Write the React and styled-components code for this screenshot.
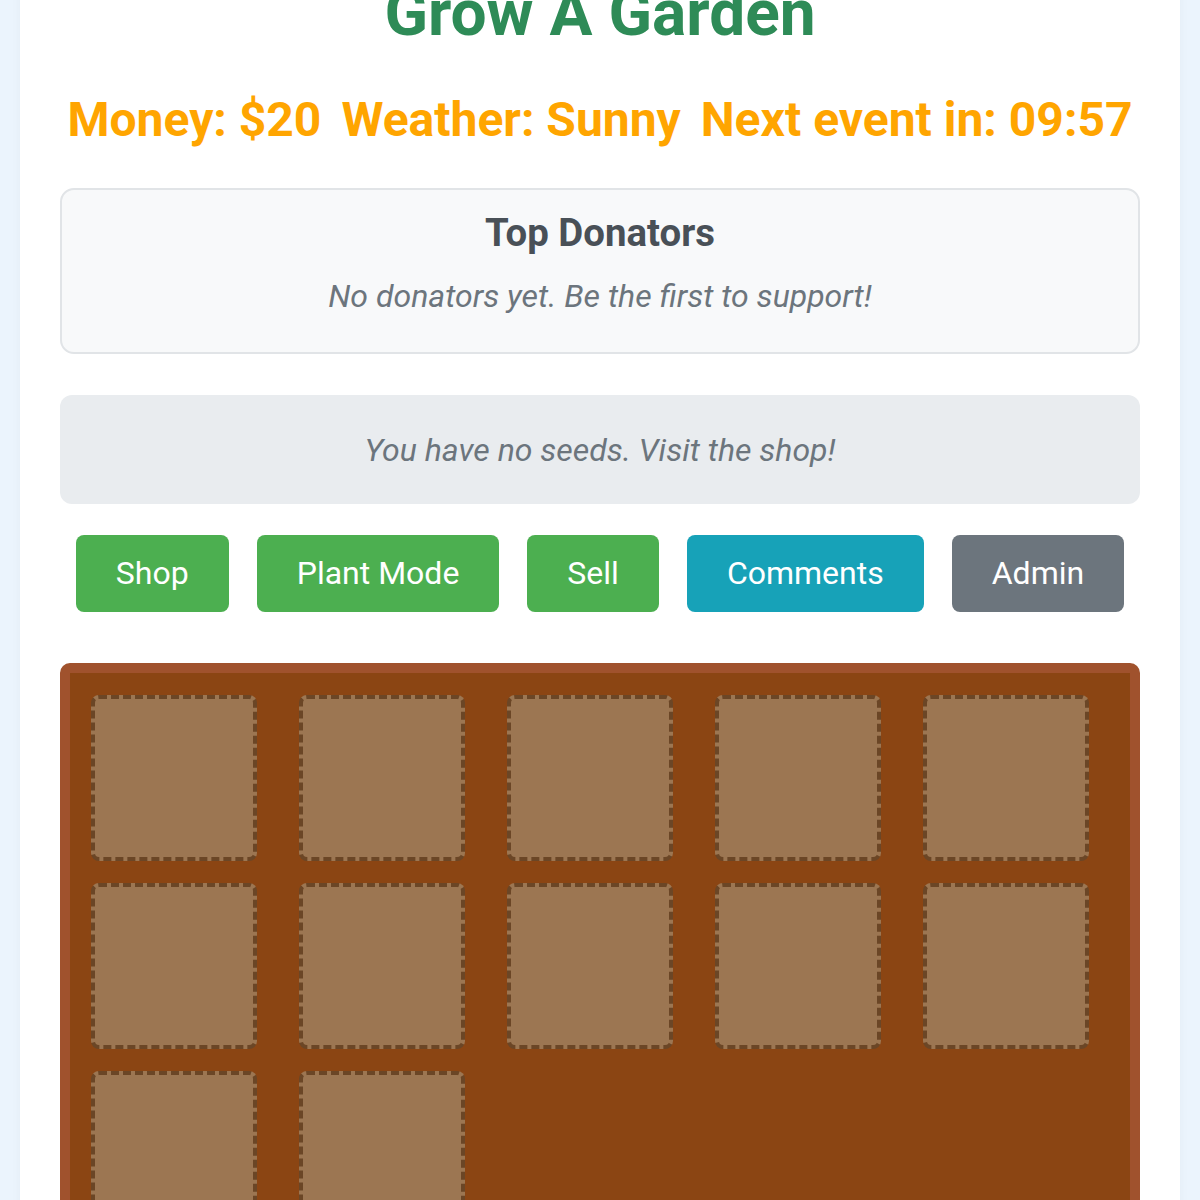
import React from 'react';
import styled, { createGlobalStyle } from 'styled-components';

const GlobalStyle = createGlobalStyle`
  html, body {
    margin: 0;
    padding: 0;
    background: #ebf4fd;
    font-family: Roboto, "Liberation Sans", Arial, sans-serif;
    overflow: hidden;
  }
`;

const Page = styled.div`
  padding: 0 20px;
  min-height: 1200px;
`;

const Container = styled.div`
  background: #ffffff;
  min-height: 1240px;
  padding: 0 40px;
  box-shadow: 0 0 10px rgba(0, 0, 0, 0.04);
`;

const Title = styled.h1`
  margin: -24px 0 40px;
  text-align: center;
  font-size: 64px;
  font-weight: 700;
  color: #2e8b57;
`;

const Stats = styled.div`
  display: flex;
  justify-content: center;
  gap: 20px;
  font-size: 48px;
  font-weight: 700;
  color: #ffa500;
  margin-bottom: 40px;
`;

const Donators = styled.div`
  background: #f8f9fa;
  border: 2px solid #e1e4e7;
  border-radius: 14px;
  padding: 20px 20px 37px;
  text-align: center;
  margin-bottom: 41px;
`;

const DonatorsTitle = styled.h3`
  margin: 0 0 22px;
  font-size: 38.4px;
  font-weight: 700;
  color: #495057;
`;

const Note = styled.p`
  margin: 0;
  font-size: 32px;
  font-style: italic;
  color: #6c757d;
`;

const Seeds = styled.div`
  background: #e9ecef;
  border-radius: 12px;
  padding: 36px 20px 35px;
  text-align: center;
  margin-bottom: 31px;
`;

const Toolbar = styled.div`
  display: flex;
  justify-content: center;
  gap: 28px;
  margin-bottom: 51px;
`;

const Button = styled.button`
  border: none;
  border-radius: 8px;
  padding: 20px 40px;
  font-family: inherit;
  font-size: 32px;
  line-height: 37px;
  color: #ffffff;
  background: ${({ $bg }) => $bg};
  cursor: pointer;
`;

const Garden = styled.div`
  background: #8b4513;
  border: 10px solid #a0522d;
  border-radius: 10px;
  padding: 22px 20px 22px 21px;
  display: grid;
  grid-template-columns: repeat(5, 166px);
  column-gap: 42px;
  row-gap: 22px;
`;

const Plot = styled.div`
  box-sizing: border-box;
  width: 166px;
  height: 166px;
  background: #9c7652;
  border: 4px dashed #6b4626;
  border-radius: 8px;
`;

const buttons = [
  { label: 'Shop', bg: '#4caf50' },
  { label: 'Plant Mode', bg: '#4caf50' },
  { label: 'Sell', bg: '#4caf50' },
  { label: 'Comments', bg: '#17a2b8' },
  { label: 'Admin', bg: '#6c757d' },
];

const App = () => {
  const plots = Array.from({ length: 12 }, (_, i) => i);

  return (
    <Page>
      <GlobalStyle />
      <Container>
        <Title>Grow A Garden</Title>
        <Stats>
          <span>Money: $20</span>
          <span>Weather: Sunny</span>
          <span>Next event in: 09:57</span>
        </Stats>
        <Donators>
          <DonatorsTitle>Top Donators</DonatorsTitle>
          <Note>No donators yet. Be the first to support!</Note>
        </Donators>
        <Seeds>
          <Note>You have no seeds. Visit the shop!</Note>
        </Seeds>
        <Toolbar>
          {buttons.map((b) => (
            <Button key={b.label} $bg={b.bg}>
              {b.label}
            </Button>
          ))}
        </Toolbar>
        <Garden>
          {plots.map((i) => (
            <Plot key={i} />
          ))}
        </Garden>
      </Container>
    </Page>
  );
};

export default App;
